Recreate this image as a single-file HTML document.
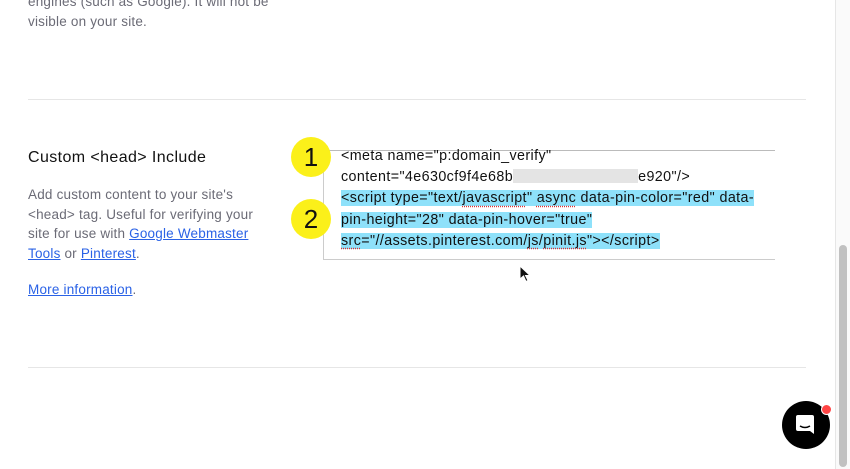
<!DOCTYPE html>
<html><head><style>
body{margin:0;width:850px;height:469px;background:#fff;font-family:"Liberation Sans",sans-serif;position:relative;overflow:hidden}
.a{position:absolute}
.d{color:#6b6b76;font-size:13.5px;line-height:19.5px;letter-spacing:.2px}
a{color:#2a62e6;text-decoration:underline}
.hl{background:#8ee1fa}
.sq{text-decoration:underline dotted #d33;text-underline-offset:3px}
</style></head><body>
<div class="a d" style="left:28px;top:-8px;width:250px">engines (such as Google). It will not be<br>visible on your site.</div>
<div class="a" style="left:28px;top:99px;width:778px;height:1px;background:#e6e6e6"></div>
<div class="a" style="left:28px;top:149px;font-size:16px;letter-spacing:.4px;color:#111">Custom &lt;head&gt; Include</div>
<div class="a d" style="left:28px;top:185px;width:228px">Add custom content to your site's &lt;head&gt; tag. Useful for verifying your site for use with <a>Google Webmaster Tools</a> or <a>Pinterest</a>.</div>
<div class="a d" style="left:28px;top:280px"><a>More information</a>.</div>
<div class="a" style="left:323px;top:150px;width:451px;height:108px;border:1px solid #ccc;border-top-color:#bbb;border-right:none"></div>
<div class="a" style="left:341px;top:146px;width:430px;font-size:14.3px;letter-spacing:.4px;line-height:21.2px;color:#111;white-space:nowrap">&lt;meta name="p:domain_verify"<br>content="4e630cf9f4e68b<span style="display:inline-block;width:125px;height:14px;background:#e4e4e4;vertical-align:-2px"></span>e920"/&gt;<br><span class="hl">&lt;script type="text/<span class="sq">javascript</span>" <span class="sq">async</span> data-pin-color="red" data-</span><br><span class="hl">pin-height="28" data-pin-hover="true" </span><br><span class="hl"><span class="sq">src</span>="//assets.pinterest.com/<span class="sq">js</span>/<span class="sq">pinit.js</span>"&gt;&lt;/script&gt;</span></div>
<div class="a" style="left:291px;top:137px;width:40px;height:40px;border-radius:50%;background:#fbf01a;font-size:26px;text-align:center;line-height:40px;color:#111">1</div>
<div class="a" style="left:291px;top:199px;width:40px;height:40px;border-radius:50%;background:#fbf01a;font-size:26px;text-align:center;line-height:40px;color:#111">2</div>
<svg class="a" style="left:519px;top:265px" width="12" height="18"><path d="M1 1V14L4.5 11L7 16.5L9 15.5L6.5 10.5H11Z" fill="#111" stroke="#fff" stroke-width="1"/></svg>
<div class="a" style="left:28px;top:367px;width:778px;height:1px;background:#e6e6e6"></div>
<div class="a" style="left:782px;top:401px;width:48px;height:48px;border-radius:50%;background:#000"></div>
<svg class="a" style="left:794px;top:412px" width="24" height="26"><path d="M4 3h14a2 2 0 0 1 2 2v17l-4-3H4a2 2 0 0 1-2-2V5a2 2 0 0 1 2-2z" fill="#fff"/><path d="M6 14q5 3 10 0" stroke="#000" stroke-width="1.6" fill="none"/></svg>
<div class="a" style="left:821px;top:404px;width:9px;height:9px;border-radius:50%;background:#f44;border:1px solid #fff"></div>
<div class="a" style="left:835px;top:0;width:15px;height:469px;background:#fafafa;border-left:1px solid #e6e6e6"></div>
<div class="a" style="left:839px;top:245px;width:8px;height:222px;border-radius:4px;background:#c1c1c1"></div>
</body></html>
